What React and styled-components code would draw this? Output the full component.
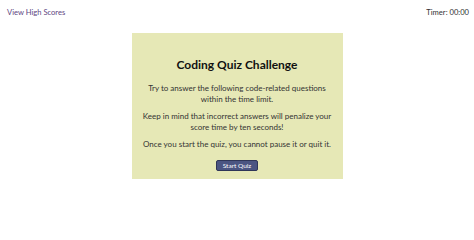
import React from 'react';
import styled, { createGlobalStyle } from 'styled-components';

const GlobalStyle = createGlobalStyle`
  body {
    margin: 0;
    background: #ffffff;
    font-family: Lato, "Noto Sans", sans-serif;
  }
`;

const Header = styled.header`
  display: flex;
  justify-content: space-between;
  align-items: center;
  height: 24px;
  padding: 0 5px 0 7px;
  font-size: 7.6px;
`;

const ScoresLink = styled.a`
  color: #5e4682;
  text-decoration: none;
  cursor: pointer;
`;

const Timer = styled.div`
  color: #333;
`;

const Card = styled.main`
  width: 211px;
  height: 146px;
  box-sizing: border-box;
  margin: 9px auto 0;
  background-color: #e6e8b6;
  display: flex;
  flex-direction: column;
  align-items: center;
  padding-top: 24px;
  text-align: center;
  color: #333;
`;

const Title = styled.h1`
  margin: 0 0 11px 0;
  font-size: 12px;
  font-weight: 700;
  color: #111;
`;

const Text = styled.p`
  margin: 0 0 7px 0;
  font-size: 8px;
  line-height: 10.5px;
  padding: 0 9px;
`;

const StartButton = styled.button`
  margin-top: 3px;
  background-color: #4b5582;
  color: #fff;
  border: 1px solid #2f3658;
  border-radius: 2px;
  font-family: inherit;
  font-size: 6.5px;
  padding: 1px 6px;
  cursor: pointer;
`;

export default function App() {
  return (
    <>
      <GlobalStyle />
      <Header>
        <ScoresLink>View High Scores</ScoresLink>
        <Timer>Timer: 00:00</Timer>
      </Header>
      <Card>
        <Title>Coding Quiz Challenge</Title>
        <Text>Try to answer the following code-related questions within the time limit.</Text>
        <Text>Keep in mind that incorrect answers will penalize your score time by ten seconds!</Text>
        <Text>Once you start the quiz, you cannot pause it or quit it.</Text>
        <StartButton>Start Quiz</StartButton>
      </Card>
    </>
  );
}
